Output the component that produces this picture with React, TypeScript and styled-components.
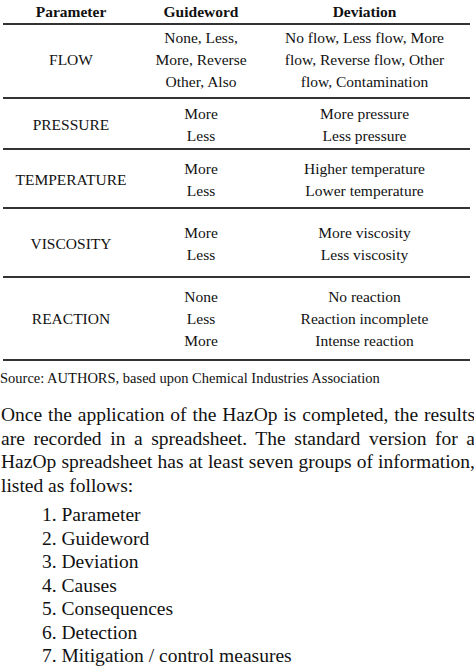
import styled, { createGlobalStyle } from 'styled-components';

const GlobalStyle = createGlobalStyle`
  html, body {
    margin: 0;
    padding: 0;
    background: #fff;
    overflow: hidden;
  }
  body {
    font-family: "Liberation Serif", "Times New Roman", serif;
    color: #111;
  }
`;

const Page = styled.div`
  width: 474px;
  height: 669px;
  overflow: hidden;
`;

const Table = styled.div`
  margin: 0 4px 0 3px;
  font-size: 15.5px;
  line-height: 22px;
`;

const Row = styled.div<{ $top: number; $bottom: number }>`
  display: flex;
  align-items: center;
  padding: ${p => p.$top}px 0 ${p => p.$bottom}px;
  border-bottom: 2px solid #333;
`;

const HeaderRow = styled(Row)`
  font-weight: bold;
`;

const Cell = styled.div<{ $width: number }>`
  width: ${p => p.$width}px;
  flex: none;
  text-align: center;
`;

const Source = styled.div`
  margin-top: 8px;
  font-size: 14.5px;
  line-height: 18px;
  white-space: nowrap;
`;

const Paragraph = styled.div`
  margin: 16px 0 0 1px;
  width: 474px;
  font-size: 19.5px;
  line-height: 23.5px;
`;

const Line = styled.div<{ $justify?: boolean }>`
  text-align: ${p => (p.$justify ? 'justify' : 'left')};
  text-align-last: ${p => (p.$justify ? 'justify' : 'left')};
`;

const List = styled.div`
  margin-top: 6px;
  padding-left: 42px;
  font-size: 19.5px;
  line-height: 23.5px;
`;

const widths = [136, 124, 203];

const rows = [
  {
    param: 'FLOW',
    guide: ['None, Less,', 'More, Reverse', 'Other, Also'],
    dev: ['No flow, Less flow, More', 'flow, Reverse flow, Other', 'flow, Contamination'],
    top: 2,
    bottom: 4,
  },
  {
    param: 'PRESSURE',
    guide: ['More', 'Less'],
    dev: ['More pressure', 'Less pressure'],
    top: 4,
    bottom: 1,
  },
  {
    param: 'TEMPERATURE',
    guide: ['More', 'Less'],
    dev: ['Higher temperature', 'Lower temperature'],
    top: 8,
    bottom: 5,
  },
  {
    param: 'VISCOSITY',
    guide: ['More', 'Less'],
    dev: ['More viscosity', 'Less viscosity'],
    top: 13,
    bottom: 10,
  },
  {
    param: 'REACTION',
    guide: ['None', 'Less', 'More'],
    dev: ['No reaction', 'Reaction incomplete', 'Intense reaction'],
    top: 8,
    bottom: 7,
  },
];

const items = [
  'Parameter',
  'Guideword',
  'Deviation',
  'Causes',
  'Consequences',
  'Detection',
  'Mitigation / control measures',
];

const Lines = ({ lines }: { lines: string[] }) => (
  <>
    {lines.map(l => (
      <div key={l}>{l}</div>
    ))}
  </>
);

export default function App() {
  return (
    <Page>
      <GlobalStyle />
      <Table>
        <HeaderRow $top={1} $bottom={0}>
          <Cell $width={widths[0]}>Parameter</Cell>
          <Cell $width={widths[1]}>Guideword</Cell>
          <Cell $width={widths[2]}>Deviation</Cell>
        </HeaderRow>
        {rows.map(r => (
          <Row key={r.param} $top={r.top} $bottom={r.bottom}>
            <Cell $width={widths[0]}>{r.param}</Cell>
            <Cell $width={widths[1]}>
              <Lines lines={r.guide} />
            </Cell>
            <Cell $width={widths[2]}>
              <Lines lines={r.dev} />
            </Cell>
          </Row>
        ))}
      </Table>
      <Source>Source: AUTHORS, based upon Chemical Industries Association</Source>
      <Paragraph>
        <Line $justify>Once the application of the HazOp is completed, the results</Line>
        <Line $justify>are recorded in a spreadsheet. The standard version for a</Line>
        <Line $justify>HazOp spreadsheet has at least seven groups of information,</Line>
        <Line>listed as follows:</Line>
      </Paragraph>
      <List>
        {items.map((it, i) => (
          <div key={it}>
            {i + 1}. {it}
          </div>
        ))}
      </List>
    </Page>
  );
}
